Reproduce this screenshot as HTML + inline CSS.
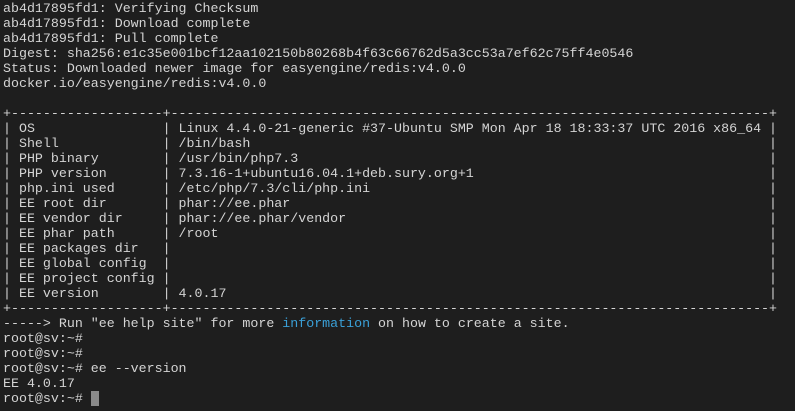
<!DOCTYPE html><html><head><style>
html,body{margin:0;background:#1e1e1e;width:795px;height:411px;overflow:hidden}
pre{margin:0;padding:1px 0 0 3px;font-family:"Liberation Mono",monospace;font-size:13.3px;line-height:15px;color:#d4d4d4}
.b{color:#3aa0d8}.c{background:#8a8a8a;color:#8a8a8a}
</style></head><body><pre>ab4d17895fd1: Verifying Checksum
ab4d17895fd1: Download complete
ab4d17895fd1: Pull complete
Digest: sha256:e1c35e001bcf12aa102150b80268b4f63c66762d5a3cc53a7ef62c75ff4e0546
Status: Downloaded newer image for easyengine/redis:v4.0.0
docker.io/easyengine/redis:v4.0.0

+-------------------+---------------------------------------------------------------------------+
| OS                | Linux 4.4.0-21-generic #37-Ubuntu SMP Mon Apr 18 18:33:37 UTC 2016 x86_64 |
| Shell             | /bin/bash                                                                 |
| PHP binary        | /usr/bin/php7.3                                                           |
| PHP version       | 7.3.16-1+ubuntu16.04.1+deb.sury.org+1                                     |
| php.ini used      | /etc/php/7.3/cli/php.ini                                                  |
| EE root dir       | phar://ee.phar                                                            |
| EE vendor dir     | phar://ee.phar/vendor                                                     |
| EE phar path      | /root                                                                     |
| EE packages dir   |                                                                           |
| EE global config  |                                                                           |
| EE project config |                                                                           |
| EE version        | 4.0.17                                                                    |
+-------------------+---------------------------------------------------------------------------+
-----&gt; Run "ee help site" for more <span class="b">information</span> on how to create a site.
root@sv:~#
root@sv:~#
root@sv:~# ee --version
EE 4.0.17
root@sv:~# <span class="c"> </span></pre></body></html>
